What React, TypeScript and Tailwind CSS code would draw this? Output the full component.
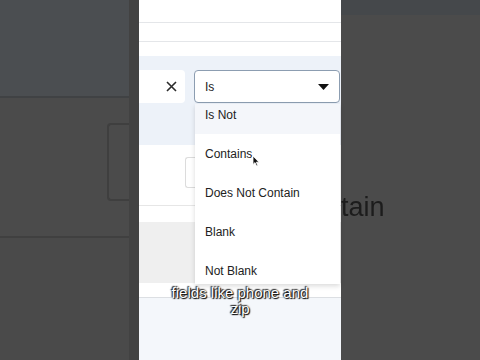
const options = ['Is Not', 'Contains', 'Does Not Contain', 'Blank', 'Not Blank']

function CloseIcon() {
  return (
    <svg width="11" height="11" viewBox="0 0 11 11" fill="none" stroke="#2b2b2b" strokeWidth="1.6">
      <path d="M1 1 L10 10 M10 1 L1 10" />
    </svg>
  )
}

function Pointer() {
  return (
    <svg width="8" height="12" viewBox="0 0 8 12">
      <path d="M1 1 L1 9.5 L3 7.6 L4.6 11 L5.8 10.4 L4.3 7.2 L7 7.2 Z" fill="#111" stroke="#fff" strokeWidth="0.8" />
    </svg>
  )
}

export default function App() {
  return (
    <div className="flex w-[480px] h-[360px] overflow-hidden bg-[#4b4b4b] font-['Liberation_Sans',Arial,sans-serif]">
      {/* blurred left backdrop */}
      <div className="flex w-[139px] shrink-0">
        <div className="flex flex-col w-[129px]">
          <div className="h-[98px] bg-[#4b4e51] border-b-2 border-[#404244]" />
          <div className="flex justify-end pt-[25px] h-[140px] border-b-2 border-[#404040]">
            <div className="w-[22px] h-[78px] border-2 border-r-0 border-[#3f3f3f] rounded-l-[4px]" />
          </div>
          <div className="flex-1 bg-[#4a4a4a]" />
        </div>
        <div className="w-[10px] bg-[#424242]" />
      </div>

      {/* app panel */}
      <div className="relative w-[202px] shrink-0 flex flex-col bg-white">
        <div className="h-[23px] border-b border-[#e4e6e9]" />
        <div className="h-[19px] border-b border-[#e4e6e9]" />
        <div className="h-[14px]" />
        <div className="h-[89px] bg-[#edf2f9] pt-[14px]">
          <div className="flex h-[33px]">
            <div className="w-[46px] bg-white rounded-r-[4px] flex items-center justify-end pr-[8px]">
              <CloseIcon />
            </div>
            <div className="ml-[9px] w-[146px] bg-white border border-[#8c9db1] rounded-[4px] flex items-center justify-between pl-[10px] pr-[10px] text-[12px] text-[#222]">
              <span>Is</span>
              <svg width="11" height="6" viewBox="0 0 11 6">
                <path d="M0 0 L11 0 L5.5 6 Z" fill="#111" />
              </svg>
            </div>
          </div>
        </div>
        <div className="h-[61px] pt-[12px] pl-[46px] border-b border-[#e6e6e6]">
          <div className="w-[12px] h-[31px] border border-r-0 border-[#dcdcdc] rounded-l-[3px]" />
        </div>
        <div className="h-[16px]" />
        <div className="h-[61px] bg-[#efefef]" />
        <div className="h-[15px] border-b border-[#dcdfe3]" />
        <div className="flex-1 bg-[#f4f7fb]" />

        {/* open select menu */}
        <div className="absolute left-[56px] top-[104px] w-[145px] h-[180px] overflow-hidden bg-white shadow-[0_2px_5px_rgba(0,0,0,0.15)]">
          <div className="-mt-[9px] flex flex-col">
            {options.map((opt, i) => (
              <div
                key={opt}
                className={`h-[39px] flex items-center pl-[10px] text-[12px] text-[#222] ${i === 0 ? 'bg-[#f4f6fa]' : ''}`}
              >
                {opt}
              </div>
            ))}
          </div>
        </div>

        <div className="absolute left-[113px] top-[155px]">
          <Pointer />
        </div>

        {/* caption */}
        <div className="absolute left-0 top-[285px] w-[202px] text-center text-[15px] leading-[16px] text-white [text-shadow:0_0_2px_#000,1px_1px_1px_#000,-1px_-1px_1px_#333]">
          fields like phone and
          <br />
          zip
        </div>
      </div>

      {/* blurred right backdrop */}
      <div className="flex-1 flex flex-col overflow-hidden">
        <div className="h-[15px] bg-[#45484b] shrink-0" />
        <div className="pt-[179px] whitespace-nowrap text-[27px] leading-none text-[#1c1c1c] blur-[0.6px]">
          tain
        </div>
      </div>
    </div>
  )
}
